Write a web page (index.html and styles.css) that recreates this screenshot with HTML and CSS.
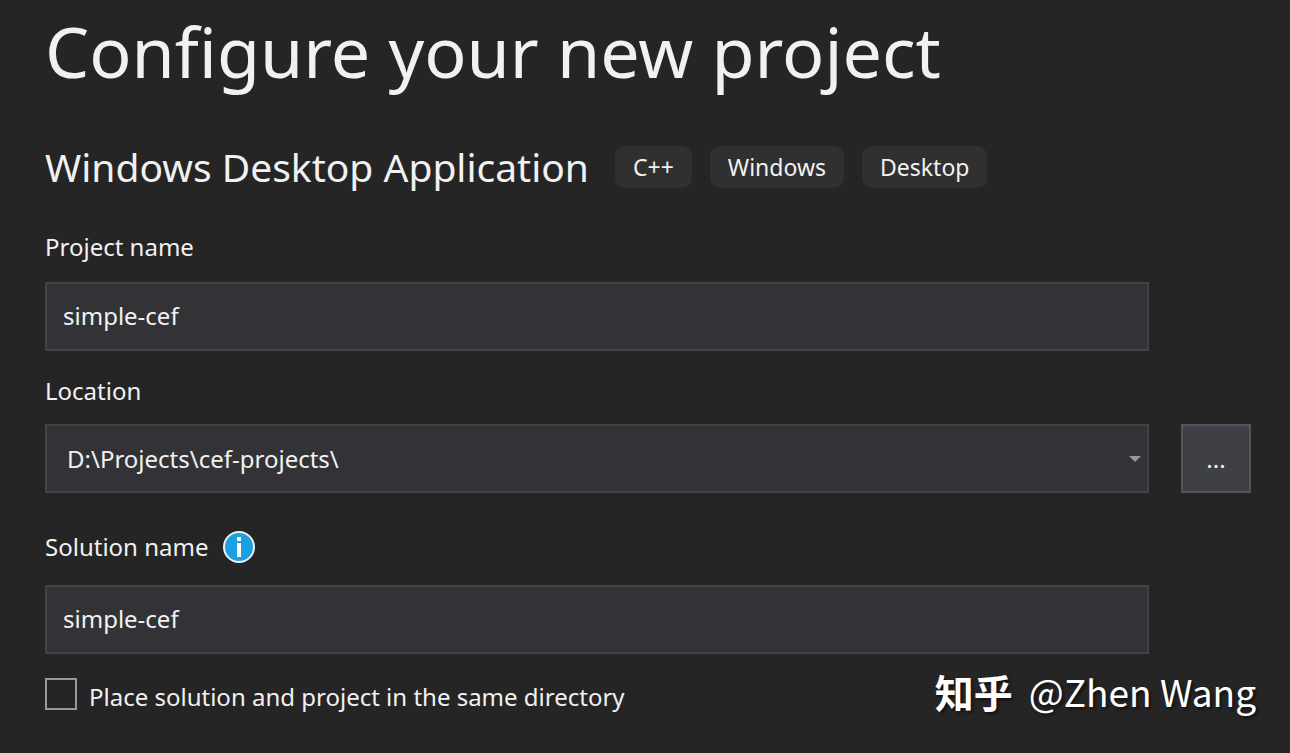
FILE: index.html
```html
<!DOCTYPE html>
<html lang="en">
<head>
  <meta charset="UTF-8" />
  <title>Configure your new project</title>
  <meta name="viewport" content="width=device-width, initial-scale=1.0" />
  <link rel="stylesheet" href="styles.css">
</head>
<body>
  <main class="dialog">
    <h1>Configure your new project</h1>

    <div class="template">
      <h2>Windows Desktop Application</h2>
      <ul class="tags">
        <li>C++</li>
        <li>Windows</li>
        <li>Desktop</li>
      </ul>
    </div>

    <form class="form">
      <div class="field">
        <label for="project-name">Project name</label>
        <input type="text" id="project-name" value="simple-cef">
      </div>

      <div class="field location">
        <label for="location">Location</label>
        <div class="select-box">
          <select id="location">
            <option>D:\Projects\cef-projects\</option>
          </select>
          <svg class="arrow" viewBox="0 0 12 6" aria-hidden="true"><path d="M0 0h12L6 6z" /></svg>
        </div>
        <button type="button" class="browse" aria-label="Browse">...</button>
      </div>

      <div class="field solution">
        <div class="label-row">
          <label for="solution-name">Solution name</label>
          <svg class="info" viewBox="0 0 32 32" aria-hidden="true">
            <circle cx="16" cy="16" r="15" fill="#1ba1e2" stroke="#f1f1f1" stroke-width="2" />
            <path d="M14 6h4v4h-4zM14 12h4v14h-4z" fill="#fff" />
          </svg>
        </div>
        <input type="text" id="solution-name" value="simple-cef">
      </div>

      <div class="check">
        <input type="checkbox" id="same-dir">
        <label for="same-dir">Place solution and project in the same directory</label>
      </div>
    </form>
  </main>

  <div class="watermark"><span class="brand" lang="zh">知乎</span> <span>@Zhen Wang</span></div>
</body>
</html>
```

FILE: styles.css
```css
* { box-sizing: border-box; margin: 0; padding: 0; }

body {
  position: relative;
  min-height: 100vh;
  background: #252526;
  color: #f1f1f1;
  font-family: "Noto Sans", "Open Sans", sans-serif;
  font-size: 24px;
  line-height: 34px;
}

.dialog { padding: 0 39px 36px 45px; }

h1 { font-size: 70px; font-weight: 400; line-height: 102px; }

/* Template name and tags */
.template { display: flex; align-items: center; gap: 26px; margin-top: 44px; }
.template h2 { font-size: 39px; font-weight: 400; line-height: 42px; }
.tags { display: flex; gap: 18px; list-style: none; }
.tags li {
  padding: 4px 18px;
  background: #303031; border-radius: 10px;
  font-size: 23px;
}

/* Fields */
.form { margin-top: 42px; }
.field {
  display: grid; grid-template-columns: 1fr 70px;
  column-gap: 32px; row-gap: 18px;
}
.field label, .field input { grid-column: 1; }
.field input, .field select {
  width: 100%; height: 69px; padding: 0 16px 2px;
  background: #333337; color: #f1f1f1;
  border: 2px solid #434346; border-radius: 0;
  font: inherit; outline: none;
}

.location { margin-top: 23px; row-gap: 16px; }
.select-box { position: relative; grid-column: 1; }
.field select { display: block; padding: 0 20px; appearance: none; }
.arrow {
  position: absolute; right: 8px; top: 32px;
  width: 12px; height: 6px; fill: #999; pointer-events: none;
}
.browse {
  grid-column: 2;
  background: #3f3f46; color: #f1f1f1;
  border: 2px solid #555558;
  font: inherit; cursor: pointer;
}

.solution { margin-top: 37px; row-gap: 21px; }
.label-row { grid-column: 1; display: flex; align-items: center; gap: 15px; }
.info { width: 32px; height: 32px; }

.check { display: flex; gap: 12px; margin-top: 24px; }
.check input {
  width: 32px; height: 32px;
  appearance: none; background: #252526; border: 2px solid #999;
}
.check input:checked { background: #999; }
.check label { padding-top: 2px; }

.watermark {
  position: absolute; right: 34px; bottom: 34px;
  display: flex; align-items: center; gap: 16px;
  color: #fff; font-family: "Noto Sans CJK SC", sans-serif;
  font-size: 37px; line-height: 56px;
  text-shadow: 2px 2px 3px #111;
}
.brand { font-size: 39px; font-weight: 700; }
```
